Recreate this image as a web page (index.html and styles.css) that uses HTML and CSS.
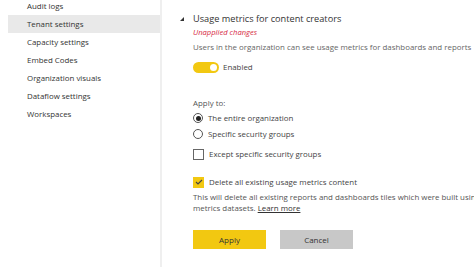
FILE: index.html
```html
<!DOCTYPE html>
<html lang="en">
<head>
<meta charset="UTF-8">
<title>Tenant settings</title>
<link rel="stylesheet" href="styles.css">
</head>
<body>

<div class="page">
    <div class="nav">
        <div class="nav-item">Audit logs</div>
        <div class="nav-item active">Tenant settings</div>
        <div class="nav-item">Capacity settings</div>
        <div class="nav-item">Embed Codes</div>
        <div class="nav-item">Organization visuals</div>
        <div class="nav-item">Dataflow settings</div>
        <div class="nav-item">Workspaces</div>
    </div>

    <div class="content">
        <div class="setting-head">
            <span class="caret"></span>
            <span class="setting-title">Usage metrics for content creators</span>
        </div>
        <div class="body">
            <div class="unapplied">Unapplied changes</div>
            <div class="desc">Users in the organization can see usage metrics for dashboards and reports</div>

            <div class="toggle-row">
                <span class="toggle"><span class="knob"></span></span>
                <span>Enabled</span>
            </div>

            <div class="apply-label">Apply to:</div>
            <div class="option">
                <span class="radio checked"></span>
                <span>The entire organization</span>
            </div>
            <div class="option">
                <span class="radio"></span>
                <span>Specific security groups</span>
            </div>
            <div class="option except">
                <span class="box"></span>
                <span>Except specific security groups</span>
            </div>

            <div class="option delete">
                <span class="box checked">
                    <svg width="8" height="6" viewBox="0 0 8 6"><path d="M1 3 L3 5 L7 1" fill="none" stroke="#444" stroke-width="1.1"/></svg>
                </span>
                <span>Delete all existing usage metrics content</span>
            </div>
            <div class="note">This will delete all existing reports and dashboards tiles which were built using usage<br>metrics datasets. <a href="#">Learn more</a></div>

            <div class="buttons">
                <button class="btn apply">Apply</button>
                <button class="btn cancel">Cancel</button>
            </div>
        </div>
    </div>
</div>

</body>
</html>
```

FILE: styles.css
```css
body { margin:0; font-family: 'Open Sans', 'Noto Sans', sans-serif; background:#fff; color:#333; overflow:hidden; }

.page { display:flex; height:267px; }

.nav { width:152px; padding-left:8px; border-right:2px solid #efefef; flex-shrink:0; margin-top:-3px; }
.nav-item { height:18px; line-height:18px; padding-left:19px; font-size:7.9px; color:#333; }
.nav-item.active { background:#e9e9e9; }

.content { flex:1; min-width:0; padding-top:10px; padding-left:18px; white-space:nowrap; overflow:hidden; }

.setting-head { display:flex; align-items:center; height:16px; }
.caret { width:0; height:0; border-left:4px solid transparent; border-bottom:4px solid #333; margin-right:9px; margin-top:1px; }
.setting-title { font-size:9.2px; color:#333; }

.body { padding-left:13px; }
.unapplied { color:#d6283e; font-style:italic; font-size:7.6px; height:13px; line-height:13px; }
.desc { color:#666; font-size:7.9px; margin-top:1px; height:14px; line-height:14px; }

.toggle-row { display:flex; align-items:center; margin-top:5px; font-size:7.9px; color:#444; height:16px; }
.toggle { width:26px; height:11px; background:#f2c811; border-radius:6px; display:flex; align-items:center; justify-content:flex-end; padding-right:2px; margin-right:4px; box-sizing:border-box; }
.knob { width:7px; height:7px; border-radius:50%; background:#fff; }

.apply-label { margin-top:21px; font-size:7.9px; color:#555; height:14px; line-height:14px; }

.option { display:flex; align-items:center; font-size:7.9px; color:#444; height:16px; }
.option.except { margin-top:4px; }
.option.delete { margin-top:12px; }

.radio { width:10px; height:10px; border:1px solid #555; border-radius:50%; box-sizing:border-box; margin-right:5px; display:flex; align-items:center; justify-content:center; }
.radio.checked::after { content:""; width:5px; height:5px; border-radius:50%; background:#222; }

.box { width:11px; height:11px; border:1px solid #666; box-sizing:border-box; margin-right:5px; display:flex; align-items:center; justify-content:center; }
.box.checked { background:#f2c811; border-color:#f2c811; }

.note { color:#555; font-size:7.9px; line-height:11px; margin-top:2px; }
.note a { color:#333; }

.buttons { display:flex; gap:14px; margin-top:16px; }
.btn { width:73px; height:19px; border:none; font-family:inherit; font-size:8px; padding:0; flex-shrink:0; }
.apply { background:#f2c811; color:#333; }
.cancel { background:#c8c8c8; color:#333; }
```
